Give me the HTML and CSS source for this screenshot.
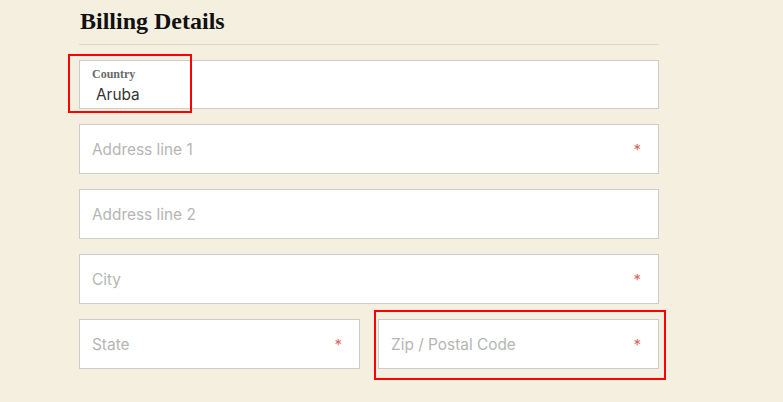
FILE: index.html
```html
<html lang="en">
<head>
    <meta charset="UTF-8">
    <meta name="viewport" content="width=device-width, initial-scale=1.0">
    <title>Billing Details</title>
    <link rel="stylesheet" href="styles.css">
</head>
<body>
    <div class="container">
        <h2>Billing Details</h2>

        <form class="billing-form">
            <div class="field field-select">
                <label for="country">Country</label>
                <div class="select-value" id="country">Aruba</div>
                <div class="highlight highlight-country"></div>
            </div>
            <div class="field">
                <input type="text" placeholder="Address line 1">
                <span class="required">*</span>
            </div>
            <div class="field">
                <input type="text" placeholder="Address line 2">
            </div>
            <div class="field">
                <input type="text" placeholder="City">
                <span class="required">*</span>
            </div>
            <div class="field-row">
                <div class="field">
                    <input type="text" placeholder="State">
                    <span class="required">*</span>
                </div>
                <div class="field">
                    <input type="text" placeholder="Zip / Postal Code">
                    <span class="required">*</span>
                    <div class="highlight highlight-zip"></div>
                </div>
            </div>
        </form>
    </div>
</body>
</html>
```

FILE: styles.css
```css
body {
    margin: 0;
    background-color: #f5efdf;
    font-family: Inter, "Noto Sans", sans-serif;
}

.container {
    width: 580px;
    padding: 8px 0 0 79px;
}

h2 {
    margin: 0;
    padding: 0 0 9px 1px;
    font-family: "Liberation Serif", serif;
    font-size: 24px;
    font-weight: bold;
    color: #111;
    border-bottom: 1px solid #ddd8cb;
}

/******/
/* FORM */
/*******/

.billing-form {
    display: flex;
    flex-direction: column;
    gap: 15px;
    margin-top: 15px;
}

.field {
    position: relative;
    height: 50px;
    box-sizing: border-box;
    background: #fff;
    border: 1px solid #cccccc;
}

.field input {
    width: 100%;
    height: 100%;
    box-sizing: border-box;
    padding: 0 40px 0 12px;
    border: none;
    outline: none;
    background: transparent;
    font-family: Inter, "Noto Sans", sans-serif;
    font-size: 15.4px;
    color: #333;
}

.field input::placeholder {
    color: #b5b5b5;
}

.required {
    position: absolute;
    right: 17px;
    top: 15px;
    color: #e06464;
    font-size: 15px;
}

.field-select {
    height: 49px;
    padding: 6px 12px 0;
}

.field-select label {
    display: block;
    font-family: "Liberation Serif", serif;
    font-size: 12px;
    font-weight: bold;
    color: #6a6a6a;
}

.select-value {
    margin: 3px 0 0 4px;
    font-size: 15.4px;
    color: #333;
}

.field-row {
    display: flex;
    gap: 18px;
}

.field-row .field {
    flex: 1;
}

/* Annotation outlines */
.highlight {
    position: absolute;
    border: 2px solid #ff0000;
    pointer-events: none;
}

.highlight-country {
    left: -12px;
    top: -7px;
    width: 120px;
    height: 55px;
}

.highlight-zip {
    left: -5px;
    top: -10px;
    width: 288px;
    height: 66px;
}
```
